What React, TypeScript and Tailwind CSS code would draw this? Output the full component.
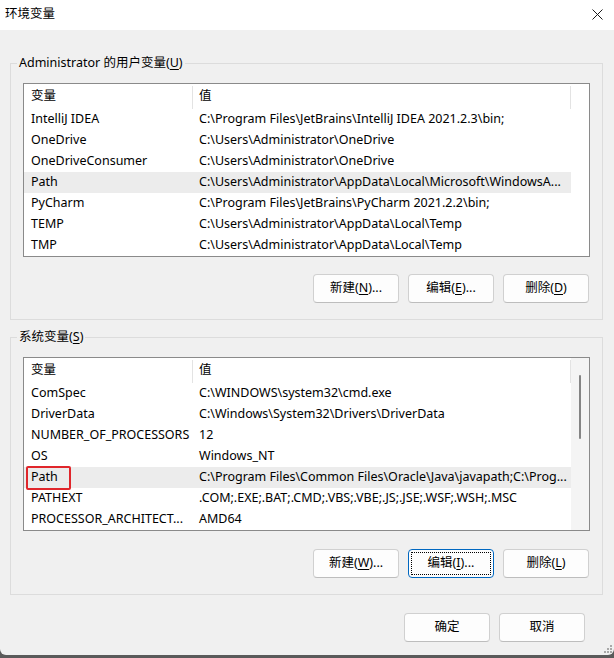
import React from 'react';

type Row = { name: string; value: string };

const userVars: Row[] = [
  { name: 'IntelliJ IDEA', value: 'C:\\Program Files\\JetBrains\\IntelliJ IDEA 2021.2.3\\bin;' },
  { name: 'OneDrive', value: 'C:\\Users\\Administrator\\OneDrive' },
  { name: 'OneDriveConsumer', value: 'C:\\Users\\Administrator\\OneDrive' },
  { name: 'Path', value: 'C:\\Users\\Administrator\\AppData\\Local\\Microsoft\\WindowsA...' },
  { name: 'PyCharm', value: 'C:\\Program Files\\JetBrains\\PyCharm 2021.2.2\\bin;' },
  { name: 'TEMP', value: 'C:\\Users\\Administrator\\AppData\\Local\\Temp' },
  { name: 'TMP', value: 'C:\\Users\\Administrator\\AppData\\Local\\Temp' },
];

const systemVars: Row[] = [
  { name: 'ComSpec', value: 'C:\\WINDOWS\\system32\\cmd.exe' },
  { name: 'DriverData', value: 'C:\\Windows\\System32\\Drivers\\DriverData' },
  { name: 'NUMBER_OF_PROCESSORS', value: '12' },
  { name: 'OS', value: 'Windows_NT' },
  { name: 'Path', value: 'C:\\Program Files\\Common Files\\Oracle\\Java\\javapath;C:\\Prog...' },
  { name: 'PATHEXT', value: '.COM;.EXE;.BAT;.CMD;.VBS;.VBE;.JS;.JSE;.WSF;.WSH;.MSC' },
  { name: 'PROCESSOR_ARCHITECT...', value: 'AMD64' },
];

const Key = ({ children }: { children: React.ReactNode }) => (
  <span className="underline underline-offset-2">{children}</span>
);

const Button = ({ children, focused }: { children: React.ReactNode; focused?: boolean }) => (
  <button
    className={
      focused
        ? 'w-[86px] h-[29px] rounded-[4px] border border-[#0067c0] bg-[#fdfdfd] outline-1 outline-dotted outline-black outline-offset-[-4px] flex items-center justify-center'
        : 'w-[86px] h-[29px] rounded-[4px] border border-[#d0d0d0] border-b-[#bdbdbd] bg-[#fdfdfd] flex items-center justify-center'
    }
  >
    {children}
  </button>
);

const VarList = ({ rows, scroll, marked }: { rows: Row[]; scroll?: boolean; marked?: boolean }) => (
  <div className="flex h-[174px] border border-[#8a8a8a] bg-white">
    <div className="w-[547px]">
      <div className="flex h-[25px]">
        <div className="w-[169px] mt-[2px] border-r border-[#e3e3e3] pl-[7px] flex items-center pb-[2px]">变量</div>
        <div className="w-[378px] mt-[2px] border-r border-[#e3e3e3] pl-[6px] flex items-center pb-[2px]">值</div>
      </div>
      {rows.map((r) => (
        <div key={r.name} className={`flex h-[21px] items-center ${r.name === 'Path' ? 'bg-[#ececec]' : ''}`}>
          <div className="relative w-[169px] pl-[7px] whitespace-nowrap overflow-visible">
            {r.name}
            {marked && r.name === 'Path' && (
              <span className="absolute left-[2px] top-[-2px] w-[45px] h-[24px] border-2 border-[#e0262b] rounded-[2px]" />
            )}
          </div>
          <div className="w-[378px] pl-[6px] whitespace-nowrap overflow-hidden">{r.value}</div>
        </div>
      ))}
    </div>
    <div className={`w-[18px] ${scroll ? 'bg-[#f4f4f4]' : ''}`}>
      {scroll && <div className="ml-[8px] mt-[17px] w-[2px] h-[64px] rounded-full bg-[#858585]" />}
    </div>
  </div>
);

const Group = ({ label, children }: { label: React.ReactNode; children: React.ReactNode }) => (
  <fieldset className="ml-[10px] w-[593px] border border-[#dcdcdc]">
    <legend className="ml-[6px] px-[2px] leading-[16px]">{label}</legend>
    <div className="px-[12px] pb-[16px]">{children}</div>
  </fieldset>
);

export default function App() {
  return (
    <div className="w-[614px] h-[658px] flex flex-col bg-[#5a5a5a] overflow-hidden text-[12.5px] text-black font-['Noto_Sans','Noto_Sans_CJK_SC',sans-serif]">
      <div className="relative h-[655px] flex flex-col bg-[#f0f0f0] rounded-b-[6px]">
        <div className="h-[30px] bg-white flex items-center justify-between pl-[5px] pr-[11px] pb-[2px]">
          <span>环境变量</span>
          <svg width="11" height="11" viewBox="0 0 11 11">
            <path d="M0.5 0.5L10.5 10.5M10.5 0.5L0.5 10.5" stroke="#1a1a1a" strokeWidth="1" />
          </svg>
        </div>

        <div className="mt-[25px]">
          <Group label={<>Administrator 的用户变量(<Key>U</Key>)</>}>
            <div className="pt-[12px]">
              <VarList rows={userVars} />
            </div>
            <div className="mt-[17px] flex justify-end gap-[9px] pr-[1px]">
              <Button>新建(<Key>N</Key>)...</Button>
              <Button>编辑(<Key>E</Key>)...</Button>
              <Button>删除(<Key>D</Key>)</Button>
            </div>
          </Group>
        </div>

        <div className="mt-[9px]">
          <Group label={<>系统变量(<Key>S</Key>)</>}>
            <div className="pt-[12px]">
              <VarList rows={systemVars} scroll marked />
            </div>
            <div className="mt-[18px] flex justify-end gap-[9px] pr-[1px]">
              <Button>新建(<Key>W</Key>)...</Button>
              <Button focused>编辑(<Key>I</Key>)...</Button>
              <Button>删除(<Key>L</Key>)</Button>
            </div>
          </Group>
        </div>

        <div className="mt-[18px] flex justify-end gap-[9px] pr-[29px]">
          <Button>确定</Button>
          <Button>取消</Button>
        </div>

        <svg className="absolute right-[2px] bottom-[2px]" width="8" height="8" viewBox="0 0 8 8">
          <rect x="6" y="0" width="2" height="2" fill="#a8a8a8" />
          <rect x="3" y="3" width="2" height="2" fill="#a8a8a8" />
          <rect x="6" y="3" width="2" height="2" fill="#a8a8a8" />
          <rect x="0" y="6" width="2" height="2" fill="#a8a8a8" />
          <rect x="3" y="6" width="2" height="2" fill="#a8a8a8" />
          <rect x="6" y="6" width="2" height="2" fill="#a8a8a8" />
        </svg>
      </div>
    </div>
  );
}
